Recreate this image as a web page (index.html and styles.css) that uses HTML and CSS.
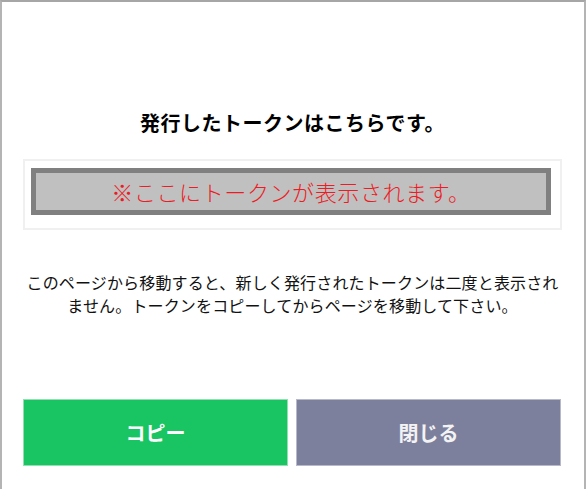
FILE: index.html
```html
<!DOCTYPE html>
<html lang="ja">
<head>
<meta charset="utf-8">
<title>トークン発行</title>
<link rel="stylesheet" href="styles.css">
</head>
<body>
<div class="window">
  <h1 class="title">発行したトークンはこちらです。</h1>
  <div class="token-box">
    <div class="token-field">※ここにトークンが表示されます。</div>
  </div>
  <p class="notice">このページから移動すると、新しく発行されたトークンは二度と表示されません。トークンをコピーしてからページを移動して下さい。</p>
  <div class="actions">
    <button class="btn btn-copy" type="button">コピー</button>
    <button class="btn btn-close" type="button">閉じる</button>
  </div>
</div>
</body>
</html>
```

FILE: styles.css
```css
* { box-sizing: border-box; }
html, body { margin: 0; padding: 0; background: #ffffff; }
body {
  font-family: "Noto Sans CJK JP", "Noto Sans", sans-serif;
  color: #000;
}
.window {
  width: 586px;
  height: 489px;
  border-top: 2px solid #a6a6a6;
  border-left: 2px solid #b4b4b4;
  border-right: 2px solid #b4b4b4;
  padding: 106px 22px 0 21px;
  overflow: hidden;
}
.title {
  margin: 0;
  font-size: 20px;
  line-height: 30px;
  font-weight: 700;
  text-align: center;
  letter-spacing: 0.5px;
}
.token-box {
  margin-top: 21px;
  height: 71px;
  border: 2px solid #f0f0f0;
  padding: 7px 0 0 6px;
}
.token-field {
  width: 520px;
  height: 47px;
  border: 5px solid #808080;
  background: #c0c0c0;
  color: #ec1c24;
  font-size: 22px;
  font-weight: 300;
  line-height: 37px;
  text-align: center;
  letter-spacing: 0.6px;
}
.notice {
  margin: 41px 0 0;
  font-size: 16px;
  line-height: 23px;
  text-align: center;
  color: #111;
  letter-spacing: 0.15px;
}
.actions {
  margin-top: 82px;
  display: flex;
  gap: 8px;
}
.btn {
  width: 265px;
  height: 67px;
  font-family: inherit;
  font-size: 20px;
  font-weight: 700;
  color: #fff;
  padding: 0;
  cursor: pointer;
}
.btn-copy {
  background: #19c463;
  border: 1px solid #93dfb2;
}
.btn-close {
  background: #7d809d;
  border: 1px solid #b7b9cb;
  color: #f3f3f3;
}
```
